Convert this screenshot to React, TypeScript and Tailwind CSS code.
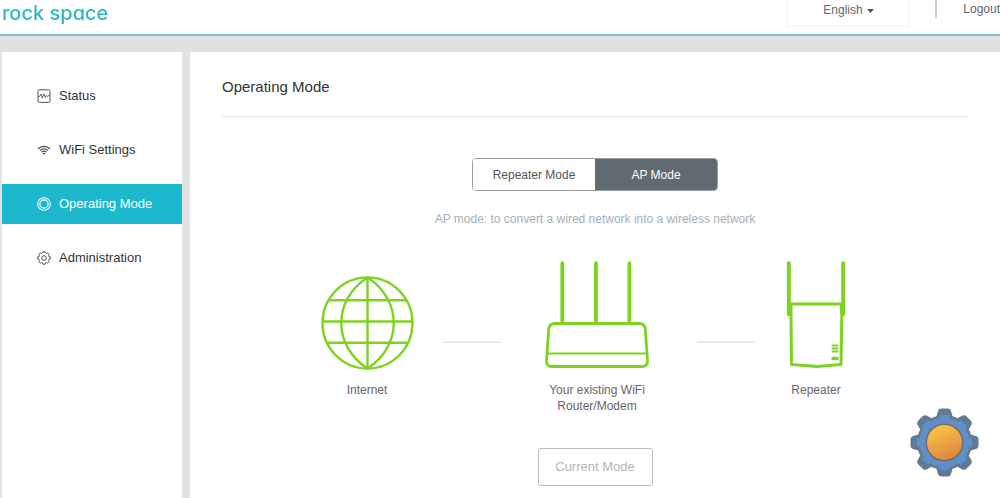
import { useState } from "react";
import type { ReactNode } from "react";

function StatusIcon() {
  return (
    <svg className="size-[14px]" viewBox="0 0 14 14" fill="none" stroke="#50565f" aria-hidden="true">
      <rect x="1" y="0.8" width="12" height="12.6" rx="1.5" strokeWidth="1" />
      <path d="M1 7.4h1.7L4 5l1.300 4.200L7 4.800l1.400 3.800 1-2.200 1 1.200L13 5.600" strokeWidth="0.9" strokeLinejoin="round" />
    </svg>
  );
}

function WifiIcon() {
  return (
    <svg className="size-[14px]" viewBox="0 0 14 14" fill="none" stroke="#444" strokeWidth="1.1" aria-hidden="true">
      <path d="M1 6C4.300 2.500 9.700 2.500 13 6M2.900 7.600c2.400-2.500 5.800-2.500 8.200 0M4.600 9.200c1.400-1.500 3.400-1.500 4.800 0" />
      <path d="M5.600 10.200c.9-.7 1.900-.7 2.800 0L7 11.700z" fill="#444" stroke="none" />
    </svg>
  );
}

function RingIcon() {
  return (
    <svg className="size-[14px]" viewBox="0 0 14 14" fill="none" stroke="currentColor" strokeWidth="1.1" aria-hidden="true">
      <circle cx="7" cy="7" r="6.3" />
      <circle cx="7" cy="7" r="4.1" />
    </svg>
  );
}

function CogIcon() {
  return (
    <svg className="size-[14px]" viewBox="0 0 14 14" fill="none" stroke="#4a4a4a" strokeWidth="1" strokeLinejoin="round" aria-hidden="true">
      <path d="M5.910.8h2.180l.430 1.230.92.390 1.170-.570 1.540 1.540-.570 1.170.390.920 1.230.430v2.180l-1.230.430-.390.920.570 1.170-1.540 1.540-1.170-.570-.920.390-.430 1.230H5.910l-.430-1.230-.920-.390-1.170.570-1.540-1.540.570-1.170-.390-.920L.8 8.090V5.910l1.230-.430.390-.920-.570-1.170 1.540-1.540 1.170.570.920-.390z" />
      <circle cx="7" cy="7" r="2.300" />
    </svg>
  );
}

function Globe() {
  return (
    <svg className="h-[94px] w-[93px]" viewBox="0 0 93 94" fill="none" stroke="#7ed321" strokeWidth="2.4" aria-hidden="true">
      <ellipse cx="46.500" cy="47" rx="45" ry="45.600" />
      <path d="M46.500 1.500v91M1.500 45.500h90M8 24.200h77M7 66.700h79" />
      <path d="M46.500 1.500C11.500 24 11.500 70 46.500 92.500M46.500 1.500C81.500 24 81.500 70 46.500 92.500" />
    </svg>
  );
}

function Router() {
  return (
    <svg className="h-[107px] w-[104px]" viewBox="0 0 104 107" fill="none" stroke="#7ed321" strokeLinecap="round" aria-hidden="true">
      <path d="M17.300 2.200v60M50.900 2.200v60M84.400 2.200v60" strokeWidth="3.800" />
      <path
        d="M10 62.500h84c3.500 0 6 2 6.300 5.500l2.200 31.500c.2 3.500-1.500 6-5 6h-91c-3.500 0-5.200-2.500-5-6L3.700 68c.3-3.500 2.800-5.500 6.300-5.500z"
        strokeWidth="2.800"
      />
      <path d="M3 92.500h98" strokeWidth="2.200" />
    </svg>
  );
}

function Repeater() {
  return (
    <svg className="h-[107px] w-[60px]" viewBox="0 0 60 107" fill="none" stroke="#7ed321" strokeLinecap="round" strokeLinejoin="round" aria-hidden="true">
      <path d="M2.800 2.200v51M57.200 2.200v51" strokeWidth="3.900" />
      <path d="M5 43h50l.800 12-.8 48.500L31 105.500 5.500 103.500 5 55z" strokeWidth="3" />
      <path d="M46.500 84.500h5M46.500 87.500h5M46.500 90.500h5" strokeWidth="2" />
      <path d="M47 97.500h4" strokeWidth="3.600" />
    </svg>
  );
}

function GearBadge() {
  const teeth = [0, 45, 90, 135, 180, 225, 270, 315];
  const tooth = "M26.500 12 28.700 4Q29.200 1.500 31.500 1.500h6Q39.800 1.500 40.300 4L42.500 12z";
  const inner = "M25.500 12.500 29.500 10.500 30.500 7h8l1 3.500 4 2z";
  return (
    <svg className="size-[69px]" viewBox="0 0 69 69" aria-hidden="true">
      <defs>
        <linearGradient id="gear-sun" x1="0.3" y1="0" x2="0.7" y2="1">
          <stop offset="0" stopColor="#fcc648" />
          <stop offset="1" stopColor="#dd8240" />
        </linearGradient>
      </defs>
      <g fill="#5c7b9b" stroke="#717983" strokeWidth="2">
        {teeth.map((a) => (
          <path key={a} d={tooth} transform={`rotate(${a} 34.5 34.5)`} />
        ))}
        <circle cx="34.500" cy="34.500" r="26.500" />
      </g>
      <g fill="#5c7b9b">
        {teeth.map((a) => (
          <path key={a} d={tooth} transform={`rotate(${a} 34.5 34.5)`} />
        ))}
      </g>
      <g fill="#618fc9">
        {teeth.map((a) => (
          <path key={a} d={inner} transform={`rotate(${a} 34.5 34.5)`} />
        ))}
        <circle cx="34.500" cy="34.500" r="25" />
      </g>
      <circle cx="34.500" cy="34.500" r="18.300" fill="url(#gear-sun)" stroke="#716d70" strokeWidth="1.600" />
    </svg>
  );
}

const menu: { label: string; icon: ReactNode }[] = [
  { label: "Status", icon: <StatusIcon /> },
  { label: "WiFi Settings", icon: <WifiIcon /> },
  { label: "Operating Mode", icon: <RingIcon /> },
  { label: "Administration", icon: <CogIcon /> },
];

export default function App() {
  const [mode, setMode] = useState("AP Mode");

  return (
    <div className="flex min-h-screen flex-col bg-[#e2e2e2] font-['Liberation_Sans',Arial,sans-serif] text-[#333]">
      <header className="flex h-[36px] items-start justify-between border-b-2 border-[#74c4c8] bg-white">
        <a
          href="#home"
          className="bg-linear-to-b from-[#2cc4b4] to-[#2fa9c4] bg-clip-text pl-[2px] font-[Inter,sans-serif] text-[20px] leading-[26px] font-medium text-transparent [font-feature-settings:'cv11']"
        >
          rock space
        </a>
        <div className="flex items-start text-[12px] text-[#666]">
          <div className="relative h-[27px] w-[122px] border-x border-b border-[#f1f1f1]">
            <select aria-label="Language" className="block h-[20px] w-full appearance-none bg-transparent pr-[30px] pl-[35px] outline-none">
              <option>English</option>
            </select>
            <svg className="pointer-events-none absolute top-[9px] right-[34px] h-[4px] w-[7px]" viewBox="0 0 7 4" fill="#555" aria-hidden="true">
              <path d="M0 0h7L3.500 4z" />
            </svg>
          </div>
          <span className="ml-[26px] h-[18px] w-[2px] bg-[#ccc]" />
          <a href="#logout" className="ml-[26px] leading-[19px]">
            Logout
          </a>
        </div>
      </header>

      <div className="flex flex-1 gap-[8px] pt-[16px] pl-[2px]">
        <nav className="w-[180px] shrink-0 bg-white pt-[24px]">
          <ul className="flex flex-col gap-[14px]">
            {menu.map((item) => {
              const active = item.label === "Operating Mode";
              return (
                <li key={item.label}>
                  <a
                    href={`#${item.label}`}
                    aria-current={active ? "page" : undefined}
                    className={
                      active
                        ? "flex h-[40px] items-center gap-[8px] bg-[#1eb8ce] pl-[35px] text-[13px] text-white"
                        : "flex h-[40px] items-center gap-[8px] pl-[35px] text-[13px] text-[#333]"
                    }
                  >
                    {item.icon}
                    {item.label}
                  </a>
                </li>
              );
            })}
          </ul>
        </nav>

        <main className="flex flex-1 flex-col bg-white px-[32px] pt-[20px] pb-[12px]">
          <h1 className="border-b border-[#e3e3e3] pb-[14px] text-[15px] leading-[30px]">Operating Mode</h1>

          <div role="group" aria-label="Mode" className="mt-[41px] flex h-[33px] w-[246px] self-center overflow-hidden rounded-[4px] border border-[#9a9fa3]">
            {["Repeater Mode", "AP Mode"].map((name) => (
              <button
                key={name}
                type="button"
                aria-pressed={mode === name}
                onClick={() => setMode(name)}
                className={
                  mode === name
                    ? "flex-1 bg-[#5f6b71] text-[12px] text-white"
                    : "flex-1 bg-white text-[12px] text-[#555]"
                }
              >
                {name}
              </button>
            ))}
          </div>

          <p className="mt-[20px] text-center text-[12px] leading-[16px] text-[#a3b0b8]">
            AP mode: to convert a wired network into a wireless network
          </p>

          <div className="mt-[34px] grid grid-cols-[152px_58px_192px_62px_122px] justify-center pr-[22px] text-center text-[12px] leading-[16px] text-[#666]">
            <figure className="flex flex-col items-center gap-[12px]">
              <div className="flex h-[109px] items-end">
                <Globe />
              </div>
              <figcaption>Internet</figcaption>
            </figure>
            <span className="mt-[80px] h-[2px] bg-[#e8e8e8]" />
            <figure className="flex flex-col items-center gap-[12px]">
              <div className="flex h-[109px] items-start">
                <Router />
              </div>
              <figcaption>
                Your existing WiFi
                <br />
                Router/Modem
              </figcaption>
            </figure>
            <span className="mt-[80px] h-[2px] w-[58px] justify-self-end bg-[#e8e8e8]" />
            <figure className="flex flex-col items-center gap-[12px]">
              <div className="flex h-[109px] items-start">
                <Repeater />
              </div>
              <figcaption>Repeater</figcaption>
            </figure>
          </div>

          <button type="button" disabled className="mt-[34px] h-[38px] w-[115px] self-center rounded-[3px] border border-[#bbb] text-[13px] text-[#b5b5b5]">
            Current Mode
          </button>
        </main>
      </div>

      <button type="button" aria-label="Settings" className="fixed right-[21px] bottom-[21px]">
        <GearBadge />
      </button>
    </div>
  );
}
